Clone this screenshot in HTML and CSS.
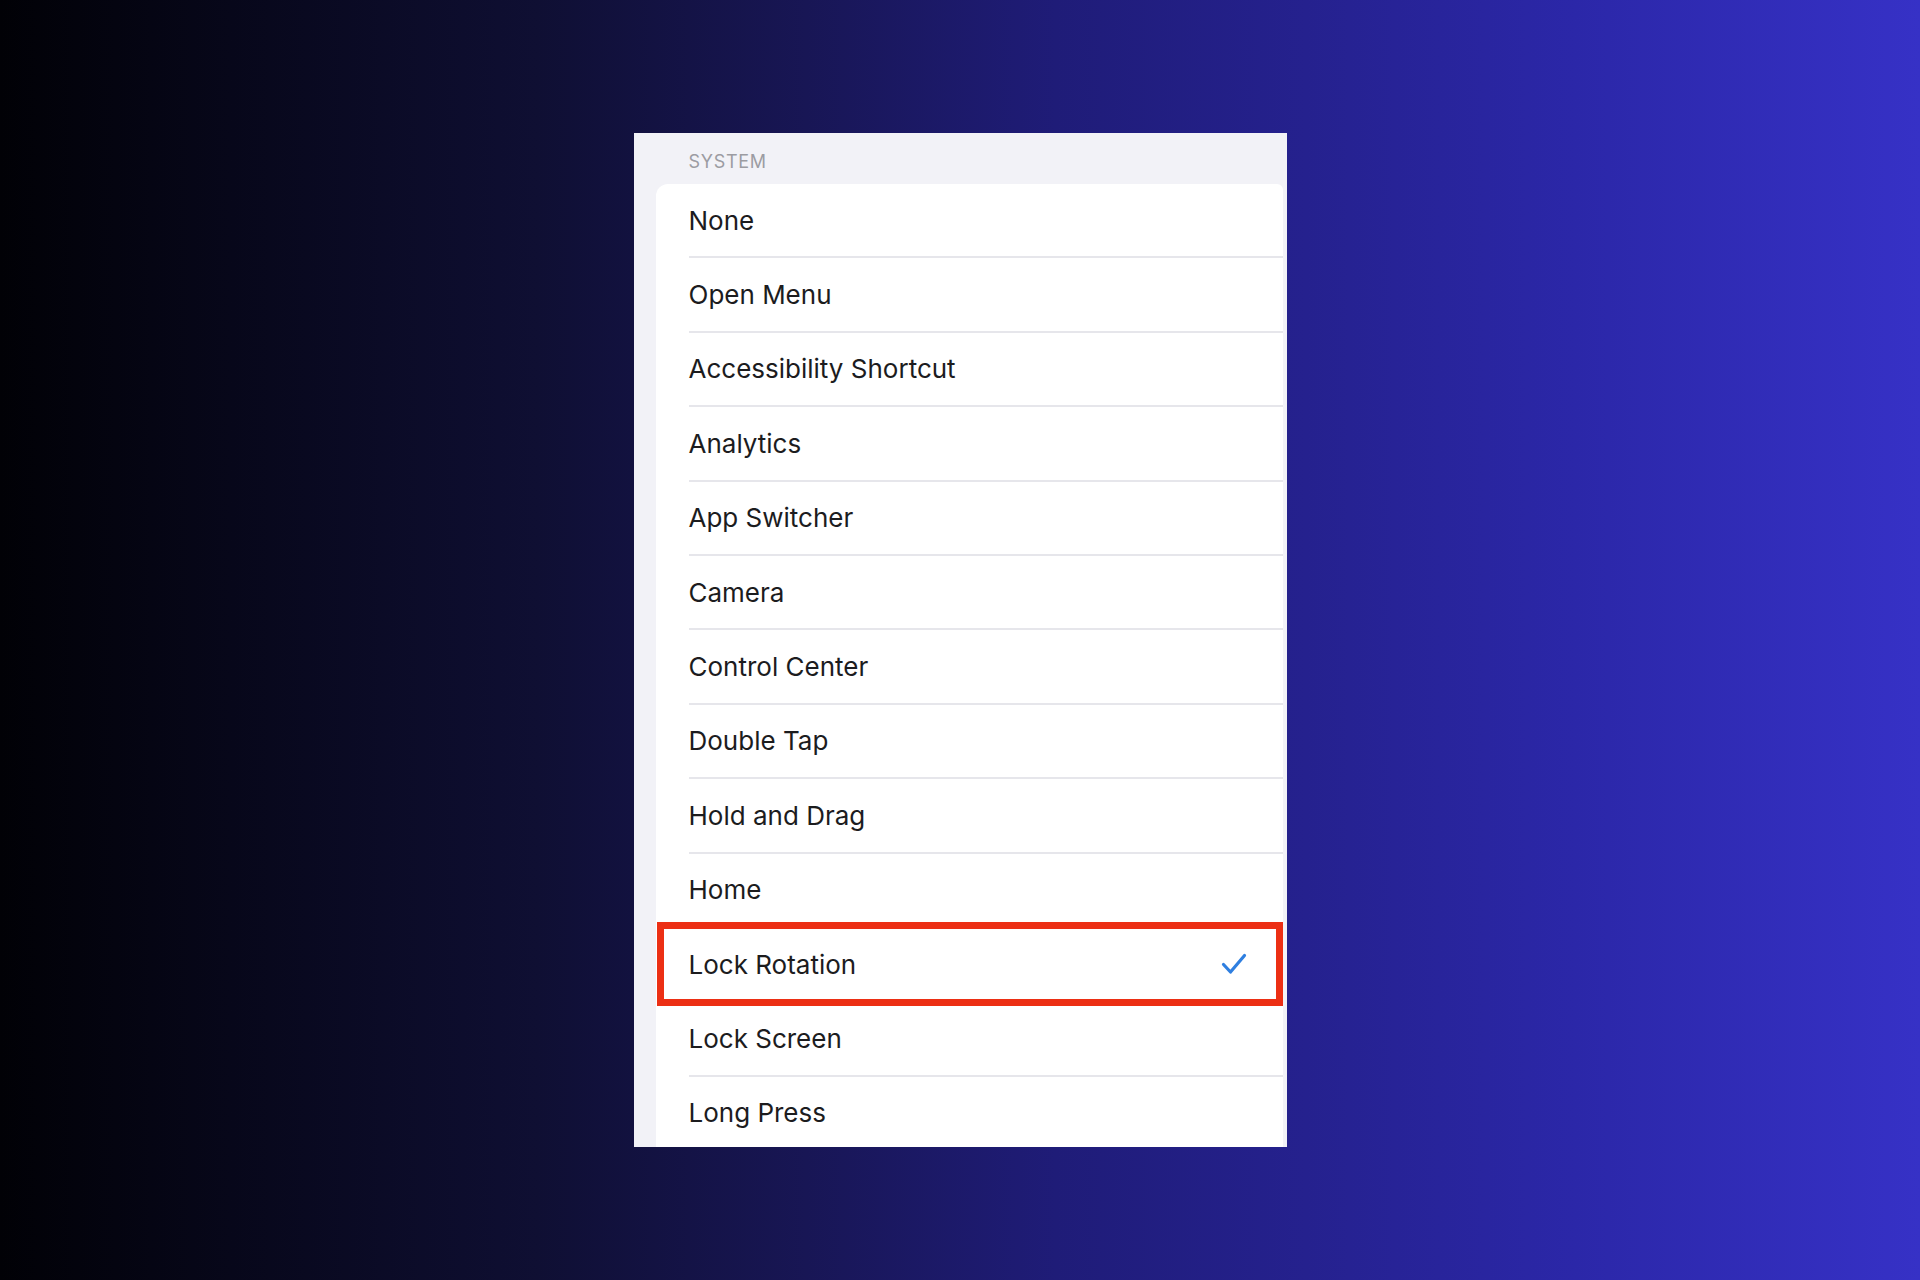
FILE: index.html
```html
<!DOCTYPE html>
<html lang="en">
<head>
<meta charset="utf-8">
<title>System actions</title>
<link rel="stylesheet" href="styles.css">
</head>
<body>
<div class="stage">
  <div class="panel">
    <div class="section-header">SYSTEM</div>
    <div class="card">
      <div class="row"><span class="label">None</span></div>
      <div class="row"><span class="label">Open Menu</span></div>
      <div class="row"><span class="label">Accessibility Shortcut</span></div>
      <div class="row"><span class="label">Analytics</span></div>
      <div class="row"><span class="label">App Switcher</span></div>
      <div class="row"><span class="label">Camera</span></div>
      <div class="row"><span class="label">Control Center</span></div>
      <div class="row"><span class="label">Double Tap</span></div>
      <div class="row"><span class="label">Hold and Drag</span></div>
      <div class="row"><span class="label">Home</span></div>
      <div class="row selected">
        <span class="label">Lock Rotation</span>
        <svg class="check" viewBox="0 0 26 22" width="26" height="22" aria-hidden="true">
          <path d="M2.5 11.5 L9.5 19 L23.5 2.5" fill="none" stroke="#2f7fe0" stroke-width="3.2" stroke-linecap="round" stroke-linejoin="round"/>
        </svg>
        <span class="highlight"></span>
      </div>
      <div class="row"><span class="label">Lock Screen</span></div>
      <div class="row"><span class="label">Long Press</span></div>
    </div>
  </div>
</div>
</body>
</html>
```

FILE: styles.css
```css
html, body {
  margin: 0;
  padding: 0;
  height: 100%;
}

body {
  background: linear-gradient(90deg,
    #010106 0%,
    #07071a 12%,
    #0f0f33 28%,
    #181655 42%,
    #1f1c78 55%,
    #25218e 68%,
    #2b27a8 82%,
    #3631c6 100%);
  font-family: Inter, "Liberation Sans", Arial, sans-serif;
}

.stage {
  height: 1280px;
  display: flex;
  align-items: center;
  justify-content: center;
}

.panel {
  width: 653px;
  height: 1014px;
  background: #f2f2f7;
  overflow: hidden;
  display: flex;
  flex-direction: column;
}

.section-header {
  height: 51px;
  flex: none;
  box-sizing: border-box;
  padding: 20px 0 0 55px;
  font-size: 18px;
  line-height: 18px;
  letter-spacing: 0.7px;
  color: #9c9ca2;
}

.card {
  margin: 0 4px 0 22px;
  background: #ffffff;
  border-radius: 12px 6px 0 0;
  flex: 1;
}

.row {
  position: relative;
  height: 74.4px;
  box-sizing: border-box;
  margin-left: 33px;
  padding-right: 36px;
  display: flex;
  align-items: center;
  justify-content: space-between;
  border-bottom: 2px solid #e6e6eb;
}

.row:nth-child(10),
.row.selected {
  border-bottom-color: transparent;
}

.label {
  font-size: 26px;
  color: #1c1c1e;
}

.check {
  display: block;
}

.highlight {
  position: absolute;
  top: -6px;
  bottom: -6px;
  left: -32px;
  right: 0;
  border: 7px solid #ec2f14;
  pointer-events: none;
}
```
